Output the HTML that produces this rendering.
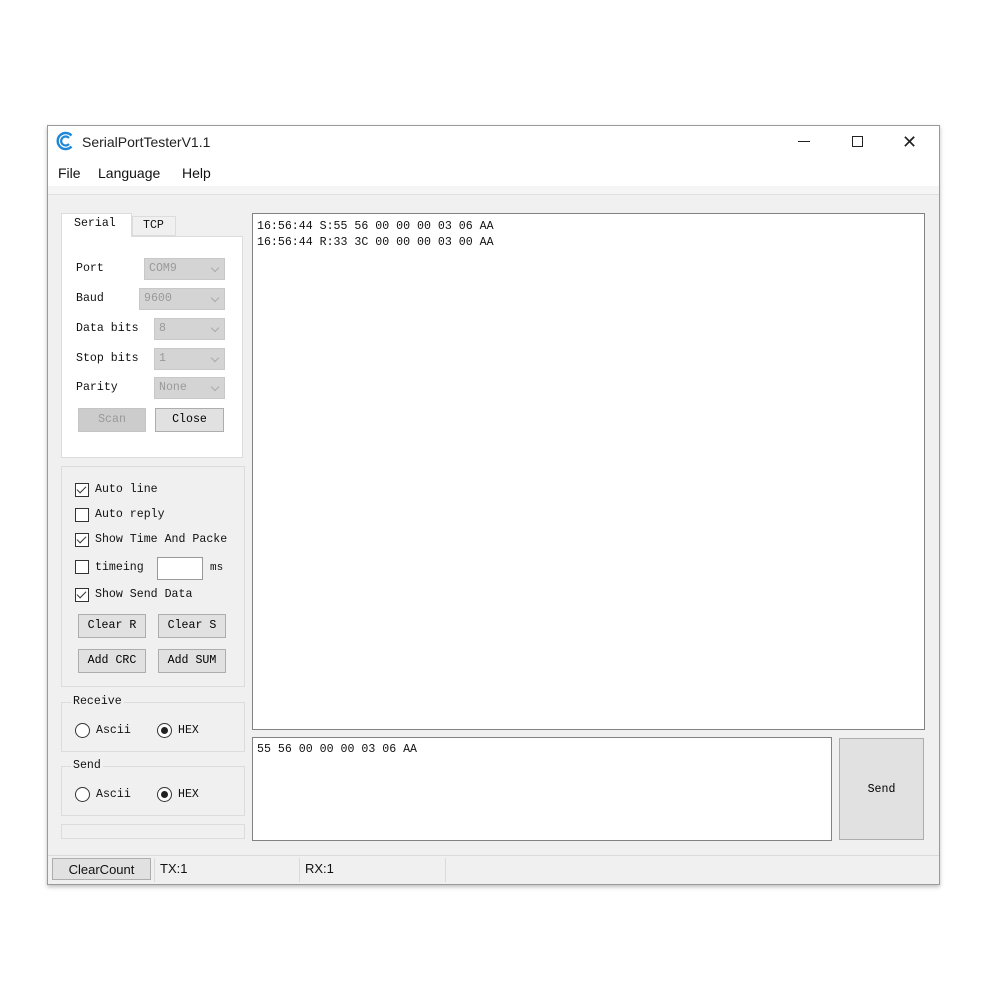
<!DOCTYPE html><html><head><style>
*{margin:0;padding:0;box-sizing:border-box}
body{width:1000px;height:1000px;background:#fff;position:relative;font-family:"Liberation Sans",sans-serif;overflow:hidden}
.a{position:absolute}
.m{font-family:"Liberation Mono",monospace;font-size:11.6px;color:#111}
.win{left:47px;top:125px;width:893px;height:760px;border:1px solid #9a9a9a;background:#f0f0f0;box-shadow:0 2px 4px rgba(0,0,0,.25)}
.combo{background:#d4d4d4;border:1px solid #c8c8c8;color:#999;font-family:"Liberation Mono",monospace;font-size:11.6px;padding:3px 0 0 4px;height:22px}
.combo:after{content:"";position:absolute;right:6px;top:6px;width:5px;height:5px;border-right:1px solid #aaa;border-bottom:1px solid #aaa;transform:rotate(45deg)}
.btn{background:#e1e1e1;border:1px solid #adadad;text-align:center;font-family:"Liberation Mono",monospace;font-size:11.6px;padding-top:4px}
.cb{width:14px;height:14px;border:1px solid #333;background:#fff}
.ck:after{content:"";position:absolute;left:3px;top:0px;width:4px;height:8px;border-right:1.5px solid #333;border-bottom:1.5px solid #333;transform:rotate(45deg)}
.rd{width:15px;height:15px;border:1px solid #333;border-radius:50%;background:#fff}
.rd.on:after{content:"";position:absolute;left:3px;top:3px;width:7px;height:7px;border-radius:50%;background:#222}
.grp{border:1px solid #dcdcdc}
</style></head><body>
<div class="a win"></div>
<div class="a" style="left:48px;top:126px;width:891px;height:60px;background:#fff"></div>
<svg class="a" style="left:56px;top:131px" width="20" height="20" viewBox="0 0 20 20"><path d="M15.5 4.5A8 8 0 1 0 15.5 15.5" fill="none" stroke="#1e88d6" stroke-width="2.4"/><path d="M13 7A4.5 4.5 0 1 0 13 13" fill="none" stroke="#1e88d6" stroke-width="2.2"/></svg>
<div class="a" style="left:82px;top:134px;font-size:14px;color:#222">SerialPortTesterV1.1</div>
<div class="a" style="left:798px;top:141px;width:12px;height:1px;background:#222"></div>
<div class="a" style="left:852px;top:136px;width:11px;height:11px;border:1px solid #222"></div>
<div class="a" style="left:902px;top:134px;font-size:18px;color:#222;line-height:16px">✕</div>
<div class="a" style="left:58px;top:165px;font-size:14px;color:#111">File</div>
<div class="a" style="left:98px;top:165px;font-size:14px;color:#111">Language</div>
<div class="a" style="left:182px;top:165px;font-size:14px;color:#111">Help</div>
<div class="a" style="left:48px;top:186px;width:891px;height:9px;background:#f5f5f5;border-bottom:1px solid #e0e0e0"></div>
<!-- tabs -->
<div class="a" style="left:61px;top:236px;width:182px;height:222px;background:#fff;border:1px solid #dcdcdc"></div>
<div class="a m" style="left:61px;top:213px;width:71px;height:24px;background:#fff;border:1px solid #dcdcdc;border-bottom:none;padding:3px 0 0 12px">Serial</div>
<div class="a m" style="left:132px;top:216px;width:44px;height:20px;background:#f0f0f0;border:1px solid #dcdcdc;padding:2px 0 0 10px">TCP</div>
<div class="a m" style="left:76px;top:262px">Port</div><div class="a combo" style="left:144px;top:258px;width:81px">COM9</div>
<div class="a m" style="left:76px;top:292px">Baud</div><div class="a combo" style="left:139px;top:288px;width:86px">9600</div>
<div class="a m" style="left:76px;top:322px">Data bits</div><div class="a combo" style="left:154px;top:318px;width:71px">8</div>
<div class="a m" style="left:76px;top:352px">Stop bits</div><div class="a combo" style="left:154px;top:348px;width:71px">1</div>
<div class="a m" style="left:76px;top:381px">Parity</div><div class="a combo" style="left:154px;top:377px;width:71px">None</div>
<div class="a btn" style="left:78px;top:408px;width:68px;height:24px;background:#ccc;color:#999;border-color:#c4c4c4">Scan</div>
<div class="a btn" style="left:155px;top:408px;width:69px;height:24px">Close</div>
<div class="a grp" style="left:61px;top:466px;width:184px;height:221px"></div>
<div class="a cb ck" style="left:75px;top:483px"></div><div class="a m" style="left:95px;top:483px">Auto line</div>
<div class="a cb" style="left:75px;top:508px"></div><div class="a m" style="left:95px;top:508px">Auto reply</div>
<div class="a cb ck" style="left:75px;top:533px"></div><div class="a m" style="left:95px;top:533px">Show Time And Packe</div>
<div class="a cb" style="left:75px;top:560px"></div><div class="a m" style="left:95px;top:561px">timeing</div>
<div class="a" style="left:157px;top:557px;width:46px;height:23px;background:#fff;border:1px solid #999"></div><div class="a m" style="left:210px;top:562px;font-size:11px">ms</div>
<div class="a cb ck" style="left:75px;top:588px"></div><div class="a m" style="left:95px;top:588px">Show Send Data</div>
<div class="a btn" style="left:78px;top:614px;width:68px;height:24px">Clear R</div>
<div class="a btn" style="left:158px;top:614px;width:68px;height:24px">Clear S</div>
<div class="a btn" style="left:78px;top:649px;width:68px;height:24px">Add CRC</div>
<div class="a btn" style="left:158px;top:649px;width:68px;height:24px">Add SUM</div>
<div class="a grp" style="left:61px;top:702px;width:184px;height:50px"></div>
<div class="a m" style="left:71px;top:695px;background:#f0f0f0;padding:0 2px">Receive</div>
<div class="a rd" style="left:75px;top:723px"></div><div class="a m" style="left:96px;top:724px">Ascii</div>
<div class="a rd on" style="left:157px;top:723px"></div><div class="a m" style="left:178px;top:724px">HEX</div>
<div class="a grp" style="left:61px;top:766px;width:184px;height:50px"></div>
<div class="a m" style="left:71px;top:759px;background:#f0f0f0;padding:0 2px">Send</div>
<div class="a rd" style="left:75px;top:787px"></div><div class="a m" style="left:96px;top:788px">Ascii</div>
<div class="a rd on" style="left:157px;top:787px"></div><div class="a m" style="left:178px;top:788px">HEX</div>
<div class="a grp" style="left:61px;top:824px;width:184px;height:15px"></div>
<!-- right -->
<div class="a m" style="left:252px;top:213px;width:673px;height:517px;background:#fff;border:1px solid #828282;padding:5px 4px;line-height:16px">16:56:44 S:55 56 00 00 00 03 06 AA<br>16:56:44 R:33 3C 00 00 00 03 00 AA</div>
<div class="a m" style="left:252px;top:737px;width:580px;height:104px;background:#fff;border:1px solid #828282;padding:5px 4px">55 56 00 00 00 03 06 AA</div>
<div class="a btn" style="left:839px;top:738px;width:85px;height:102px;padding-top:44px">Send</div>
<!-- status -->
<div class="a" style="left:48px;top:855px;width:891px;height:1px;background:#dadada"></div>
<div class="a" style="left:52px;top:858px;width:99px;height:22px;background:#e1e1e1;border:1px solid #adadad;font-size:13px;text-align:center;padding-top:3px;color:#111">ClearCount</div>
<div class="a" style="left:160px;top:861px;font-size:13px;color:#111">TX:1</div>
<div class="a" style="left:154px;top:858px;width:1px;height:24px;background:#dadada"></div>
<div class="a" style="left:299px;top:858px;width:1px;height:24px;background:#dadada"></div>
<div class="a" style="left:305px;top:861px;font-size:13px;color:#111">RX:1</div>
<div class="a" style="left:445px;top:858px;width:1px;height:24px;background:#dadada"></div>
</body></html>
